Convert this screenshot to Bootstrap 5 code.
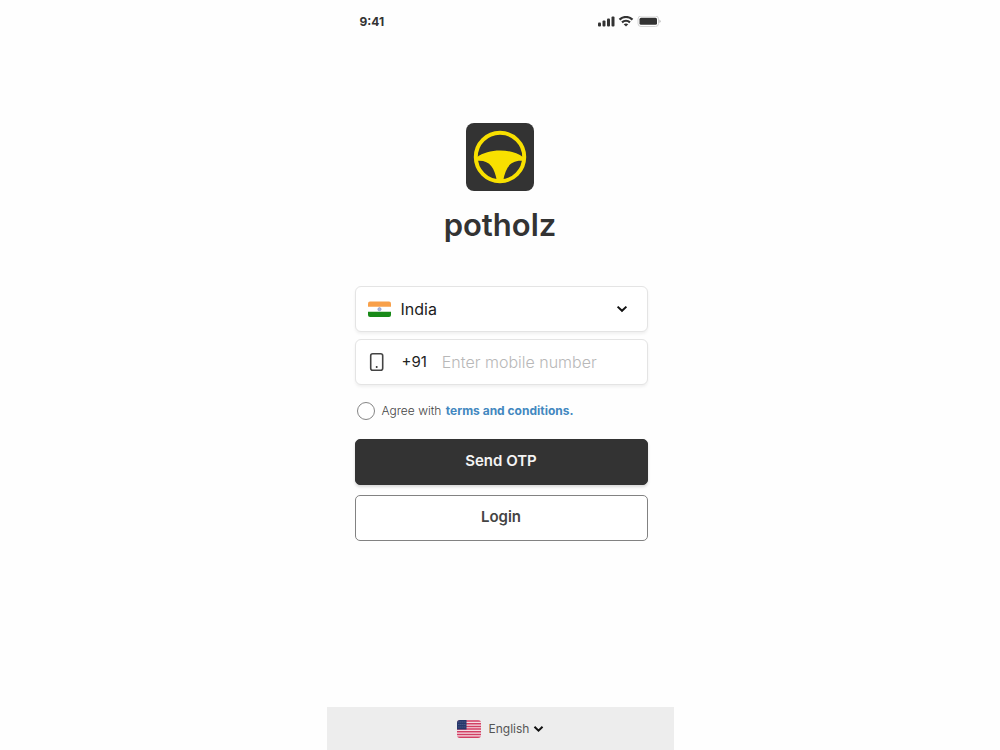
<!DOCTYPE html>
<html lang="en">
<head>
<meta charset="utf-8">
<meta name="viewport" content="width=device-width, initial-scale=1">
<title>potholz</title>
<link href="https://cdn.jsdelivr.net/npm/bootstrap@5.3.0/dist/css/bootstrap.min.css" rel="stylesheet">
<style>
  :root { --ink: #333333; --line: #e4e4e4; }
  body { font-family: Inter, "Noto Sans", sans-serif; color: var(--ink); background: #fefefe; }
  .phone { max-width: 347px; }
  .status { padding: 12px 13px 0 33px; font-size: 12px; line-height: 20px; }
  .brand { padding-top: 91px; }
  .wordmark { font-size: 31px; line-height: 40px; font-weight: 600; margin-top: 14px; }
  .signup { padding: 41px 26px 0 28px; }
  .field { height: 46px; border: 1px solid var(--line); border-radius: 6px; background: #fff; box-shadow: 0 2px 3px rgba(0, 0, 0, .06); padding-left: 12px; margin-bottom: 7px; }
  .field .form-select, .field .form-control { border: 0; background-color: transparent; font-size: 16px; height: 44px; padding: 0; color: #1c1c1c; }
  .field .form-select { margin-left: 10px; background-image: url("data:image/svg+xml,%3Csvg xmlns='http://www.w3.org/2000/svg' viewBox='0 0 12 8'%3E%3Cpath d='M1.6 1.6 6 5.8l4.400-4.200' fill='none' stroke='%23111' stroke-width='2'/%3E%3C/svg%3E"); background-size: 12px 8px; background-position: right 19px center; }
  .field .form-control::placeholder { color: #b8b8b8; font-weight: 300; opacity: 1; }
  .dial { font-size: 15px; color: #222; margin: 0 15px 0 17px; }
  .agree { font-size: 12px; line-height: 20px; padding: 9px 0 0 2px; gap: 7px; }
  .agree .form-check-input { width: 18px; height: 18px; margin: 0; border-color: #858585; flex: none; }
  .agree label { color: #444; font-weight: 300; }
  .agree a { color: #4388c0; font-weight: 700; margin-left: 1px; }
  .action { height: 46px; border-radius: 5px; font-size: 15px; font-weight: 600; padding: 0 0 2px; }
  .send { background: var(--ink); border-color: var(--ink); color: #f4f4f4; margin-top: 18px; box-shadow: 0 2px 3px rgba(0, 0, 0, .15); }
  .login { background: #fff; border-color: #828282; color: #444; margin-top: 10px; }
  .language { background: #ededed; height: 43px; gap: 8px; }
  .language select { appearance: none; border: 0; width: 55px; padding: 0 14px 0 0; font-size: 12px; color: #555; background: url("data:image/svg+xml,%3Csvg xmlns='http://www.w3.org/2000/svg' viewBox='0 0 12 8'%3E%3Cpath d='M1.600 1.600 6 5.800l4.400-4.200' fill='none' stroke='%23111' stroke-width='2.200'/%3E%3C/svg%3E") no-repeat right center / 11px 8px; }
</style>
</head>
<body>
<div class="phone min-vh-100 mx-auto d-flex flex-column">
  <header class="status d-flex justify-content-between align-items-center">
    <span class="fw-bold">9:41</span>
    <svg width="63" height="12" viewBox="0 0 63 12" aria-label="Signal, Wi-Fi and battery">
      <g fill="#333"><rect x="0" y="6.500" width="3" height="4" rx="1"/><rect x="4.500" y="4.500" width="3" height="6" rx="1"/><rect x="9" y="2.500" width="3" height="8" rx="1"/><rect x="13.500" y=".5" width="3" height="10" rx="1"/></g>
      <g fill="none" stroke="#333" stroke-width="2.200"><path d="M21.500 3.600c3.700-3.500 9.300-3.500 13 0"/><path d="M24 6.400c2.300-2 5.700-2 8 0"/></g>
      <path d="M25.700 8.300c1.300-1.100 3.300-1.100 4.600 0L28 10.500z" fill="#333"/>
      <rect x="40" y="0" width="20.500" height="10.500" rx="3" fill="#fff" stroke="#d4d4d4"/><rect x="41.500" y="1.800" width="17.500" height="7" rx="1.500" fill="#333"/><path d="M61.500 3.500V7q1-.5 1-1.750T61.500 3.500" fill="#aaa"/>
    </svg>
  </header>

  <main>
    <div class="brand d-flex flex-column align-items-center">
      <svg width="68" height="68" viewBox="0 0 68 68" aria-hidden="true">
        <rect width="68" height="68" rx="8" fill="#333"/>
        <circle cx="34" cy="34" r="24.200" fill="none" stroke="#f8e000" stroke-width="4"/>
        <path d="M10.500 34.500C17 29.600 25 27.500 34 27.500S51 29.600 57.500 34.500L56.500 37.800C44 37 39.500 45 37.200 57.500H30.800C28.500 45 24 37 11.500 37.800z" fill="#f8e000"/>
      </svg>
      <h1 class="wordmark mb-0">potholz</h1>
    </div>

    <form class="signup" onsubmit="return false">
      <div class="field d-flex align-items-center">
        <svg class="flex-shrink-0" width="23" height="16" viewBox="0 0 23 16" aria-hidden="true">
          <rect y="0" width="23" height="16" rx="2" fill="#fff"/>
          <path d="M0 5.800V2.500q0-2 2-2h19q2 0 2 2v3.300z" fill="#f8a04a"/><path d="M0 10.800V14q0 2 2 2h19q2 0 2-2v-3.200z" fill="#188a18"/>
          <circle cx="11.500" cy="8.200" r="1.600" fill="#a9b6dc" stroke="#7b8ec4" stroke-width=".6"/>
        </svg>
        <select class="form-select shadow-none" aria-label="Country"><option>India</option></select>
      </div>
      <div class="field d-flex align-items-center">
        <svg class="flex-shrink-0" width="17" height="20" viewBox="0 0 17 20" aria-hidden="true">
          <rect x="2.700" y="1.700" width="12" height="16.600" rx="2" fill="none" stroke="#444" stroke-width="1.600"/><circle cx="8.700" cy="15" r="1" fill="#333"/>
        </svg>
        <label class="dial" for="mobile">+91</label>
        <input class="form-control shadow-none" id="mobile" type="tel" placeholder="Enter mobile number">
      </div>
      <div class="agree d-flex align-items-center">
        <input class="form-check-input" type="radio" id="agree">
        <label for="agree">Agree with <a class="text-decoration-none" href="#">terms and conditions.</a></label>
      </div>
      <button class="btn action send w-100" type="submit">Send OTP</button>
      <button class="btn action login w-100" type="button">Login</button>
    </form>
  </main>

  <footer class="language mt-auto d-flex align-items-center justify-content-center">
    <svg width="24" height="18" viewBox="0 0 24 18" aria-hidden="true">
      <defs><clipPath id="us"><rect width="24" height="18" rx="3"/></clipPath></defs>
      <g clip-path="url(#us)"><rect width="24" height="18" fill="#f5dfe5"/>
        <path d="M0 1h24M0 3.700h24M0 6.400h24M0 9.100h24M0 11.800h24M0 14.500h24M0 17.200h24" stroke="#d23f64" stroke-width="1.500"/>
        <rect width="9.500" height="9.500" fill="#26376b"/>
        <path d="M1.500 2h7M1.500 4.500h7M1.500 7h7" stroke="#8390b5" stroke-width=".7" stroke-dasharray=".8 1.200"/></g>
    </svg>
    <select aria-label="Language"><option>English</option></select>
  </footer>
</div>
<script src="https://cdn.jsdelivr.net/npm/bootstrap@5.3.0/dist/js/bootstrap.bundle.min.js"></script>
</body>
</html>
